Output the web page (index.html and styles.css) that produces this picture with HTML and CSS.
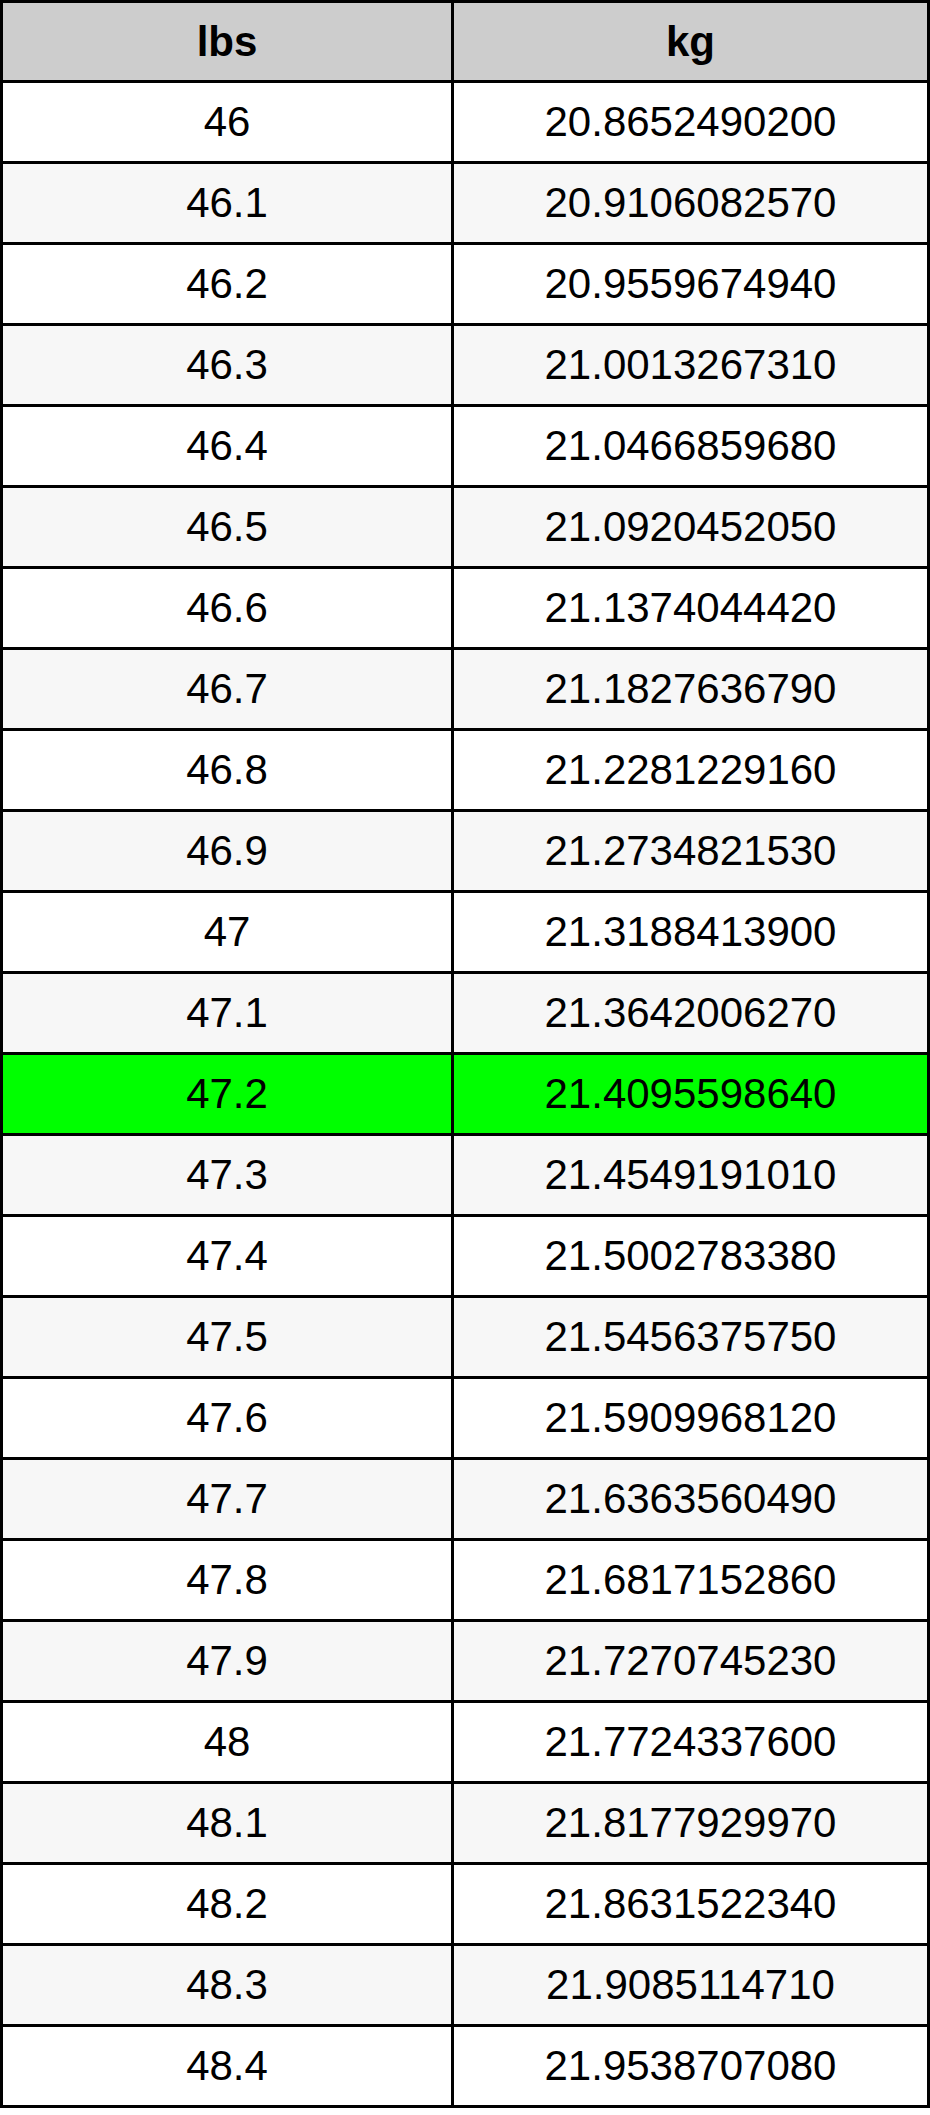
FILE: index.html
```html
<!DOCTYPE html>
<html>
<head>
<meta charset="utf-8">
<link rel="stylesheet" href="styles.css">
</head>
<body>
<table class="conv">
<colgroup><col class="c1"><col class="c2"></colgroup>
<thead>
<tr><th>lbs</th><th>kg</th></tr>
</thead>
<tbody>
<tr><td>46</td><td>20.8652490200</td></tr>
<tr><td>46.1</td><td>20.9106082570</td></tr>
<tr><td>46.2</td><td>20.9559674940</td></tr>
<tr><td>46.3</td><td>21.0013267310</td></tr>
<tr><td>46.4</td><td>21.0466859680</td></tr>
<tr><td>46.5</td><td>21.0920452050</td></tr>
<tr><td>46.6</td><td>21.1374044420</td></tr>
<tr><td>46.7</td><td>21.1827636790</td></tr>
<tr><td>46.8</td><td>21.2281229160</td></tr>
<tr><td>46.9</td><td>21.2734821530</td></tr>
<tr><td>47</td><td>21.3188413900</td></tr>
<tr><td>47.1</td><td>21.3642006270</td></tr>
<tr class="hl"><td>47.2</td><td>21.4095598640</td></tr>
<tr><td>47.3</td><td>21.4549191010</td></tr>
<tr><td>47.4</td><td>21.5002783380</td></tr>
<tr><td>47.5</td><td>21.5456375750</td></tr>
<tr><td>47.6</td><td>21.5909968120</td></tr>
<tr><td>47.7</td><td>21.6363560490</td></tr>
<tr><td>47.8</td><td>21.6817152860</td></tr>
<tr><td>47.9</td><td>21.7270745230</td></tr>
<tr><td>48</td><td>21.7724337600</td></tr>
<tr><td>48.1</td><td>21.8177929970</td></tr>
<tr><td>48.2</td><td>21.8631522340</td></tr>
<tr><td>48.3</td><td>21.9085114710</td></tr>
<tr><td>48.4</td><td>21.9538707080</td></tr>
</tbody>
</table>
</body>
</html>
```

FILE: styles.css
```css
html, body {
  margin: 0;
  padding: 0;
  background: #fff;
}

.conv {
  width: 930px;
  table-layout: fixed;
  border-collapse: separate;
  border-spacing: 3px;
  background: #000;
  font-family: "Liberation Sans", Arial, sans-serif;
  font-size: 42px;
  color: #000;
}

.c1 { width: 448px; }
.c2 { width: 473px; }

.conv th,
.conv td {
  padding: 0;
  text-align: center;
  vertical-align: middle;
  line-height: 1;
}

.conv th {
  height: 77px;
  background: #cdcdcd;
  font-weight: bold;
}

.conv td {
  height: 78px;
  background: #fff;
  font-weight: normal;
}

.conv tbody tr:nth-child(even) td {
  background: #f7f7f7;
}

.conv tbody tr.hl td {
  background: #00ff00;
}
```
